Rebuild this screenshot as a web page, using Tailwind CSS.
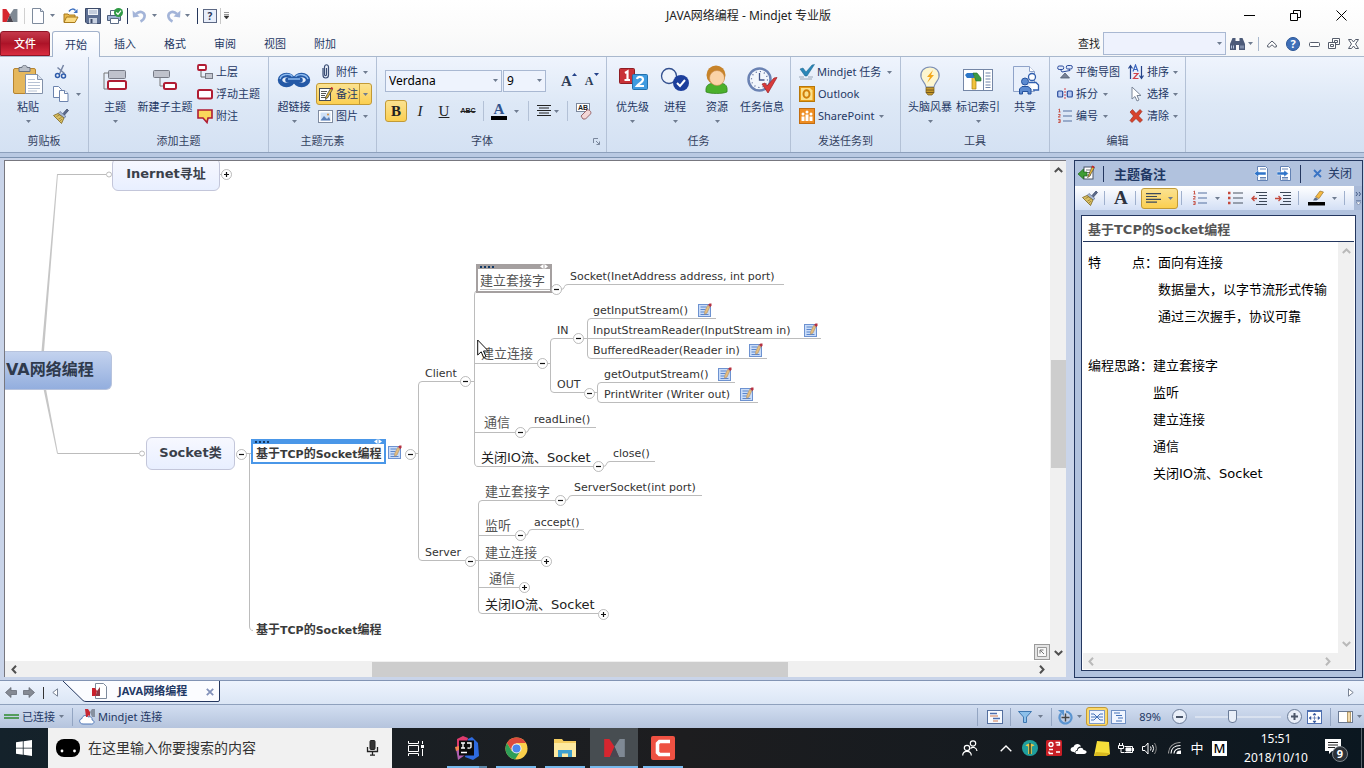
<!DOCTYPE html>
<html lang="zh-CN">
<head>
  <meta charset="UTF-8">
  <meta name="viewport" content="width=device-width, initial-scale=1">
  <title>JAVA网络编程 - Mindjet 专业版</title>
  <script src="https://cdn.jsdelivr.net/npm/@tailwindcss/browser@4"></script>
</head>
<body class="h-screen overflow-hidden flex flex-col bg-[#b9c9e2] font-['Noto_Sans','Noto_Sans_CJK_SC',sans-serif] text-[11px] leading-4 text-[#1f3864]">

  <!-- Shared symbols -->
  <svg class="hidden">
    <symbol id="caret" viewBox="0 0 5 3"><path d="M0 0h5L2.500 3z" fill="#6f7c90"/></symbol>
    <symbol id="note" viewBox="0 0 14 14">
      <rect x=".5" y="1.500" width="12" height="12" fill="#c9dcf8" stroke="#6d92d0"/>
      <path d="M2.500 4h6M2.500 6.500h5M2.500 9h4M2.500 11.500h8" stroke="#5b86cc"/>
      <path d="M9.500 2.500l2.500 1-3 6.500-2.500 1.500.2-3z" fill="#e5bd7e" stroke="#9a8160" stroke-width=".5"/>
      <path d="M10 2l1.500-1.500h2v2L12.500 4z" fill="#b5303f"/>
    </symbol>
    <symbol id="pad" viewBox="0 0 16 16">
      <rect x="1.500" y="2.500" width="11" height="12" fill="#fff" stroke="#444b57"/>
      <path d="M3 5.500h6M3 7.500h5M3 9.500h4M3 11.500h7" stroke="#555"/>
      <path d="M12.500 2.500l2 1-5 8.500-2 1.500.3-2.700z" fill="#e8b93b" stroke="#333" stroke-width=".7"/>
      <path d="M12.300 2.600L13.400 1l1.800 1-.7 1.600z" fill="#c1272d"/>
    </symbol>
    <symbol id="brush" viewBox="0 0 16 16">
      <path d="M10 5.500L14 1l1.500 1.500L11.500 7z" fill="#5b6b8c" stroke="#36415e" stroke-width=".7"/>
      <path d="M7 3.500l6 5-2 1.500-6-4.500z" fill="#a9b8d3" stroke="#536384" stroke-width=".6"/>
      <path d="M5 5.500l6 4.500-2.500 5.500L.5 7.500z" fill="#d9bf63" stroke="#7b6420" stroke-width=".8"/>
      <path d="M3.500 8.500l3-1.500M5.500 11l3-1.500M7 13l2-2" stroke="#8c7430" stroke-width=".7"/>
    </symbol>
    <symbol id="mlogo" viewBox="0 0 16 14">
      <path d="M0 0h4l4 6-3.500 8H0z" fill="#d6262f"/>
      <path d="M16 0h-4L8 6l3.500 8H16z" fill="#7f8994"/>
      <path d="M8 6l3.500 8h-7z" fill="#4a4650"/>
    </symbol>
    <symbol id="numlist" viewBox="0 0 16 16">
      <path d="M1.500 1.500l1-.5v3M1.500 4h2M1.200 6.500h2v1l-2 1.500h2.300M1.200 11.500h2v3h-2M1.500 13h1.500" stroke="#c4483b" stroke-width=".9" fill="none"/>
      <path d="M6 3h9M6 8h9M6 13h9" stroke="#55719f" stroke-width="1.200"/>
    </symbol>
    <symbol id="plus" viewBox="0 0 11 11"><circle cx="5.500" cy="5.500" r="5" fill="#fff" stroke="#a9a9a9" stroke-width=".8"/><path d="M3 5.500h5M5.500 3v5" stroke="#111" stroke-width="1.200"/></symbol>
    <symbol id="minus" viewBox="0 0 11 11"><circle cx="5.500" cy="5.500" r="5" fill="#fff" stroke="#a9a9a9" stroke-width=".8"/><path d="M3 5.500h5" stroke="#111" stroke-width="1.200"/></symbol>
  </svg>

  <!-- Title bar -->
  <header class="relative shrink-0 h-[31px] bg-gradient-to-b from-white to-[#fbfbfb] flex items-center justify-between">
    <div class="flex items-center pl-[2px]">
      <svg class="w-4 h-[13px]"><use href="#mlogo"/></svg>
      <span class="w-px h-4 bg-[#d0d0d0] ml-[6px]"></span>
      <button aria-label="新建" class="ml-[5px]"><svg class="size-4" viewBox="0 0 16 16"><path d="M2.500.5h8l3 3v12h-11z" fill="#fdfdff" stroke="#7d8a9c"/><path d="M10.500.5v3h3" fill="#dfe6f2" stroke="#7d8a9c"/></svg></button>
      <svg class="w-[5px] h-[3px] ml-[4px]"><use href="#caret"/></svg>
      <button aria-label="打开" class="ml-[8px]"><svg class="size-4" viewBox="0 0 16 16"><path d="M1 14V6h4l1 1h6v2" fill="#e9b94d" stroke="#a87b1e"/><path d="M3.500 9H15l-3 5.500H1z" fill="#fbdb83" stroke="#a87b1e"/><path d="M6 3.500c2-3 5-3 6.500-1" fill="none" stroke="#3c6fc0" stroke-width="1.500"/><path d="M14.500 1v4h-4z" fill="#3c6fc0"/></svg></button>
      <button aria-label="保存" class="ml-[6px]"><svg class="size-4" viewBox="0 0 16 16"><path d="M.5.5h15v15H2l-1.500-1.500z" fill="#5d6f93" stroke="#3c4a68"/><path d="M3 1h10v6H3z" fill="#eef2f8"/><path d="M4 3h8M4 5h8" stroke="#9aa8c2"/><path d="M4 10h8v5.500H4z" fill="#c9d2e2"/><path d="M5.500 11h2v4h-2z" fill="#3c4a68"/></svg></button>
      <button aria-label="打印" class="ml-[6px]"><svg class="size-4" viewBox="0 0 16 16"><path d="M3.500 7V2.500h7V7" fill="#fff" stroke="#5c6c86"/><path d="M.5 7.500h13v5H.5z" fill="#9fb2d2" stroke="#4d5e7c"/><path d="M3.500 10.500h8v5h-8z" fill="#fff" stroke="#5c6c86"/><circle cx="11.500" cy="4.500" r="4.500" fill="#2f9a44"/><path d="M9.200 4.500l1.800 1.800 3-3.600" fill="none" stroke="#fff" stroke-width="1.300"/></svg></button>
      <span class="w-px h-4 bg-[#25365a] ml-[4px]"></span>
      <button aria-label="撤消" class="ml-[4px]"><svg class="size-4" viewBox="0 0 16 16"><path d="M4 6c4.500-4.500 9.500-1 8.500 3-.4 2-2 3.500-4 4.500" fill="none" stroke="#a3b4d8" stroke-width="2.600"/><path d="M.5 2.500l.5 7 6.500-1z" fill="#a3b4d8"/></svg></button>
      <svg class="w-[5px] h-[3px] ml-[4px]"><use href="#caret"/></svg>
      <button aria-label="恢复" class="ml-[8px]"><svg class="size-4" viewBox="0 0 16 16"><path d="M12 6C7.500 1.500 2.500 5 3.500 9c.4 2 2 3.500 4 4.500" fill="none" stroke="#a3b4d8" stroke-width="2.600"/><path d="M15.500 2.500l-.5 7-6.500-1z" fill="#a3b4d8"/></svg></button>
      <svg class="w-[5px] h-[3px] ml-[4px]"><use href="#caret"/></svg>
      <span class="w-px h-4 bg-[#25365a] ml-[7px]"></span>
      <button aria-label="帮助主题" class="ml-[5px] size-[14px] bg-[#e8eefa] border border-[#5c6884] leading-3 font-bold text-[10px] text-[#2c3758]">?</button>
      <span class="w-px h-4 bg-[#c8c8c8] ml-[3px]"></span>
      <svg class="w-[5px] h-[7px] ml-[3px]" viewBox="0 0 5 7"><path d="M0 .5h5M0 2.500h5M0 4h5L2.500 7z" fill="#333" stroke="#333" stroke-width=".5"/></svg>
    </div>
    <h1 class="absolute inset-x-0 mx-auto w-fit left-[133px] text-xs text-[#222]">JAVA网络编程 - Mindjet 专业版</h1>
    <div class="relative flex items-center text-black">
      <button aria-label="最小化" class="w-[46px] flex justify-center"><svg class="size-[11px]" viewBox="0 0 11 11"><path d="M0 5.500h11" stroke="currentColor"/></svg></button>
      <button aria-label="还原" class="w-[46px] flex justify-center"><svg class="size-[11px]" viewBox="0 0 11 11" fill="none" stroke="currentColor"><path d="M.5 3.500h7v7h-7zM3.500 3V.5h7v7H8"/></svg></button>
      <button aria-label="关闭" class="w-[46px] flex justify-center"><svg class="size-[11px]" viewBox="0 0 11 11"><path d="M.5.5l10 10M10.500.5l-10 10" stroke="currentColor"/></svg></button>
    </div>
  </header>

  <!-- Ribbon tabs -->
  <nav class="shrink-0 h-[26px] bg-gradient-to-b from-[#fbfbfb] to-[#f6f7f8] border-b border-[#a9b8cd] flex justify-between">
    <div class="flex">
      <button class="w-[50px] h-[25px] rounded-t-[3px] border border-[#8f1425] bg-gradient-to-b from-[#c5384b] via-[#ad1328] to-[#d92c40] text-white font-medium">文件</button>
      <button class="ml-[2px] w-[48px] h-[26px] rounded-t-[3px] border border-b-0 border-[#a3b3cc] bg-gradient-to-b from-white to-[#eff4fd]">开始</button>
      <button class="w-[50px]">插入</button>
      <button class="w-[50px]">格式</button>
      <button class="w-[50px]">审阅</button>
      <button class="w-[50px]">视图</button>
      <button class="w-[50px]">附加</button>
    </div>
    <div class="flex items-center pr-[5px]">
      <label for="find" class="text-[#222] mr-[3px]">查找</label>
      <div class="relative">
        <input id="find" type="text" class="block w-[123px] h-[23px] border border-[#a9b8d2] bg-[#eef2fd] px-1">
        <svg class="absolute right-[4px] top-[10px] w-[5px] h-[3px]"><use href="#caret"/></svg>
      </div>
      <button aria-label="查找" class="ml-[4px]"><svg class="w-[15px] h-[14px]" viewBox="0 0 15 14"><path d="M2.500 1h3v3h4V1h3L15 7v6H9V8H6v5H0V7z" fill="#4c5a78"/><path d="M1.500 8.500v3M3.500 8.500v3M11 8.500v3M13 8.500v3" stroke="#b4c1dc"/></svg></button>
      <svg class="w-[5px] h-[3px] ml-[3px]"><use href="#caret"/></svg>
      <span class="w-px h-[14px] bg-[#a9b8cd] ml-[5px]"></span>
      <button aria-label="折叠功能区" class="ml-[8px]"><svg class="w-[10px] h-2" viewBox="0 0 10 8"><path d="M.7 5L5 1l4.300 4v2H7.500L5 4.800 2.500 7H.7z" fill="#fff" stroke="#555c6b"/></svg></button>
      <button aria-label="帮助" class="ml-[9px] size-[14px] rounded-full bg-[#3e6fb8] border border-[#2b5596] text-white font-bold leading-3">?</button>
      <button aria-label="最小化文档" class="ml-[9px]"><svg class="w-[11px] h-[6px]" viewBox="0 0 11 6"><rect x=".5" y="1.500" width="10" height="4" rx="1" fill="#fff" stroke="#555c6b"/></svg></button>
      <button aria-label="还原文档" class="ml-[8px]"><svg class="w-3 h-[11px]" viewBox="0 0 12 11" fill="#fff" stroke="#555c6b"><path d="M4.500.5h7v6h-7z"/><path d="M6.500 2.500h3v2h-3zM.5 4.500h7v6h-7z"/><path d="M2.500 6.500h3v2h-3z"/></svg></button>
      <button aria-label="关闭文档" class="ml-[8px]"><svg class="w-[11px] h-[10px]" viewBox="0 0 11 10"><path d="M.5.5h3l2 2.500 2-2.500h3L7.500 5l3 4.500h-3L5.500 7l-2 2.500h-3L3.500 5z" fill="#fff" stroke="#555c6b"/></svg></button>
    </div>
  </nav>

  <!-- Ribbon -->
  <section class="shrink-0 h-24 flex whitespace-nowrap bg-gradient-to-b from-[#eff4fd] via-[#dde8f6] to-[#d4e1f3] border-b border-[#8da0bc]">

    <div class="w-[89px] shrink-0 border-r border-[#b3c1d6] flex flex-col">
      <div class="h-[76px] pt-1 pl-1 flex">
        <button class="w-12 pt-1 flex flex-col items-center">
          <svg class="size-[34px] shrink-0" viewBox="0 0 34 34"><rect x="2.500" y="3.500" width="22" height="25" rx="1.500" fill="#e5b75c" stroke="#b68430"/><path d="M8 2.500h3c0-3 5-3 5 0h3v4H8z" fill="#b9bec7" stroke="#6c7380"/><path d="M14.500 9.500h12l5 5v14h-17z" fill="#fff" stroke="#8291aa"/><path d="M26.500 9.500v5h5" fill="#dbe3f0" stroke="#8291aa"/><path d="M17 14.500h7M17 17.500h12M17 20.500h12M17 23.500h12M17 26h9" stroke="#b7c2d4"/></svg>
          <span>粘贴</span><svg class="w-[5px] h-[3px] mt-[5px]"><use href="#caret"/></svg>
        </button>
        <div class="flex flex-col pl-px">
          <button aria-label="剪切" class="h-[22px]"><svg class="size-4" viewBox="0 0 16 16"><path d="M10.500 1L6.500 10M4.500 3.500l7 6" stroke="#7584a4" stroke-width="1.500"/><circle cx="4.500" cy="11.500" r="2" fill="none" stroke="#2f5cab" stroke-width="1.500"/><circle cx="10.500" cy="12" r="2" fill="none" stroke="#2f5cab" stroke-width="1.500"/></svg></button>
          <button aria-label="复制" class="h-[22px] flex items-center"><svg class="size-4" viewBox="0 0 16 16" fill="#fff" stroke="#6c83ad"><path d="M.5.5h5l3 3v8h-8z"/><path d="M6.500 4.500h5l3.500 3v8H6.500z"/><path d="M11.500 4.500v3H15"/></svg><svg class="w-[5px] h-[3px] ml-[7px]"><use href="#caret"/></svg></button>
          <button aria-label="格式刷" class="h-[22px]"><svg class="size-4"><use href="#brush"/></svg></button>
        </div>
      </div>
      <h2 class="text-center text-[#33415f]">剪贴板</h2>
    </div>

    <div class="w-[180px] shrink-0 border-r border-[#b3c1d6] flex flex-col">
      <div class="h-[76px] pt-1 pl-[6px] flex">
        <button class="w-10 pt-1 flex flex-col items-center">
          <svg class="size-[34px] shrink-0" viewBox="0 0 34 34"><path d="M10 8H6v16h4" fill="none" stroke="#777"/><rect x="10.500" y="5.500" width="17" height="8" rx="1" fill="#bfc2cc" stroke="#767a86"/><rect x="10" y="16" width="18" height="8" rx="1.500" fill="#fff" stroke="#b01c33" stroke-width="2"/></svg>
          <span>主题</span><svg class="w-[5px] h-[3px] mt-[5px]"><use href="#caret"/></svg>
        </button>
        <button class="w-[60px] pt-1 flex flex-col items-center">
          <svg class="size-[34px] shrink-0" viewBox="0 0 34 34"><path d="M12 13v8h6" fill="none" stroke="#777"/><rect x="5.500" y="5.500" width="16" height="7" rx="1" fill="#bfc2cc" stroke="#767a86"/><rect x="16" y="18" width="12" height="6" rx="1.500" fill="#fff" stroke="#b01c33" stroke-width="2"/></svg>
          <span>新建子主题</span>
        </button>
        <div class="flex flex-col pl-[2px]">
          <button class="h-[22px] flex items-center gap-[3px]"><svg class="size-4" viewBox="0 0 16 16"><path d="M4 6v7h4" fill="none" stroke="#666"/><rect x="1" y="1" width="8" height="5" rx="1" fill="#fff" stroke="#b01c33" stroke-width="1.800"/><rect x="8.500" y="9.500" width="7" height="5" fill="#c3c6cf" stroke="#767a86"/></svg>上层</button>
          <button class="h-[22px] flex items-center gap-[3px]"><svg class="size-4" viewBox="0 0 16 16"><rect x="1" y="4" width="14" height="8.500" rx="1.500" fill="#fff" stroke="#b01c33" stroke-width="2"/></svg>浮动主题</button>
          <button class="h-[22px] flex items-center gap-[3px]"><svg class="size-4" viewBox="0 0 16 16"><path d="M1 2h14v8h-4l-1 4.500L6 10H1z" fill="#f9d75b" stroke="#b01c33" stroke-width="1.600"/></svg>附注</button>
        </div>
      </div>
      <h2 class="text-center text-[#33415f]">添加主题</h2>
    </div>

    <div class="w-[108px] shrink-0 border-r border-[#b3c1d6] flex flex-col">
      <div class="h-[76px] pt-1 pl-[5px] flex">
        <button class="w-10 pt-1 flex flex-col items-center">
          <svg class="size-[34px] shrink-0" viewBox="0 0 34 34"><g fill="none" stroke="#2459a6" stroke-width="4.500"><ellipse cx="9.500" cy="15" rx="6.500" ry="5"/><ellipse cx="24.500" cy="15" rx="6.500" ry="5"/></g><path d="M11 15h12" stroke="#2459a6" stroke-width="5.500" stroke-linecap="round"/><g fill="none" stroke="#8dbbf0" stroke-width="1.400"><path d="M3 14c1-5 10-6 12.500-2.500M18.500 11.500c3-3 11-2.500 12.500 2.500M11 14h12"/></g></svg>
          <span>超链接</span><svg class="w-[5px] h-[3px] mt-[5px]"><use href="#caret"/></svg>
        </button>
        <div class="flex flex-col pl-[2px]">
          <button class="w-14 h-[22px] pl-[2px] flex items-center"><svg class="size-4" viewBox="0 0 16 16"><path d="M5 4v7c0 4 5.500 4 5.500 0V3c0-3-4-3-4 0v7.500c0 1.500 2 1.500 2 0V4" fill="none" stroke="#3a4d74" stroke-width="1.200"/></svg><span class="ml-[2px]">附件</span><svg class="w-[5px] h-[3px] ml-[5px]"><use href="#caret"/></svg></button>
          <button class="w-14 h-[22px] pl-px flex items-center rounded-[3px] border border-[#c29a36] bg-gradient-to-b from-[#fbe28f] to-[#fbcf4f]"><svg class="size-4"><use href="#pad"/></svg><span class="ml-[2px]">备注</span><span class="w-px self-stretch ml-px bg-[#c29a36]"></span><svg class="w-[5px] h-[3px] ml-[3px]"><use href="#caret"/></svg></button>
          <button class="w-14 h-[22px] pl-[2px] flex items-center"><svg class="size-4" viewBox="0 0 16 16"><rect x=".5" y="2.500" width="14" height="12" fill="#fff" stroke="#7f8ba0"/><path d="M2.500 4.500h10v8h-10z" fill="#cfe0f6"/><path d="M2.500 12.500L6 8l3 3 2-2 1.500 3.500z" fill="#5a7fb8"/><circle cx="10" cy="6.500" r="1" fill="#d38a3a"/></svg><span class="ml-[2px]">图片</span><svg class="w-[5px] h-[3px] ml-[5px]"><use href="#caret"/></svg></button>
        </div>
      </div>
      <h2 class="text-center text-[#33415f]">主题元素</h2>
    </div>

    <div class="w-[230px] shrink-0 border-r border-[#b3c1d6] flex flex-col">
      <div class="h-[76px] pt-[13px] pl-2 flex flex-col gap-2">
        <div class="flex items-center h-[22px]">
          <div class="relative">
            <select aria-label="字体" class="appearance-none block w-[117px] h-[22px] px-[3px] border border-[#a9b8d2] bg-[#eef3fd] text-xs text-black"><option>Verdana</option></select>
            <svg class="absolute right-1 top-[9px] w-[5px] h-[3px]"><use href="#caret"/></svg>
          </div>
          <div class="relative ml-px">
            <select aria-label="字号" class="appearance-none block w-[43px] h-[22px] px-[3px] border border-[#a9b8d2] bg-[#eef3fd] text-xs text-black"><option>9</option></select>
            <svg class="absolute right-1 top-[9px] w-[5px] h-[3px]"><use href="#caret"/></svg>
          </div>
          <button aria-label="增大字号" class="ml-[15px] flex font-['Liberation_Serif',serif] font-bold text-[15px] text-[#2c3c55]">A<svg class="w-[5px] h-[3px]" viewBox="0 0 5 3"><path d="M0 3h5L2.500 0z" fill="#24428a"/></svg></button>
          <button aria-label="减小字号" class="ml-[8px] flex font-['Liberation_Serif',serif] font-bold text-xs text-[#2c3c55]">A<svg class="w-[5px] h-[3px]" viewBox="0 0 5 3"><path d="M0 0h5L2.500 3z" fill="#24428a"/></svg></button>
        </div>
        <div class="flex items-center h-[22px] font-['Liberation_Serif',serif] text-[15px] text-[#222]">
          <button aria-label="加粗" class="size-[22px] rounded-[3px] border border-[#c29a36] bg-gradient-to-b from-[#fbe28f] to-[#fbcf4f] font-bold">B</button>
          <button aria-label="倾斜" class="w-[26px] italic">I</button>
          <button aria-label="下划线" class="w-[22px] underline">U</button>
          <button aria-label="删除线" class="w-[26px] font-['Liberation_Sans',sans-serif] text-[7px] font-bold line-through">ABC</button>
          <span class="w-px h-5 bg-[#b3c1d6] ml-[2px]"></span>
          <button aria-label="字体颜色" class="ml-[7px] w-4 h-[18px] flex flex-col items-center"><span class="h-[14px] leading-[14px] font-bold text-[#31538c]">A</span><span class="w-4 h-1 bg-black"></span></button>
          <svg class="w-[5px] h-[3px] ml-[7px]"><use href="#caret"/></svg>
          <span class="w-px h-5 bg-[#b3c1d6] ml-[9px]"></span>
          <button aria-label="对齐" class="ml-[8px]"><svg class="w-[14px] h-3" viewBox="0 0 14 12"><path d="M0 .5h14M2 3h10M0 5.500h14M2 8h10M0 10.500h14" stroke="#222" stroke-width="1.200"/></svg></button>
          <svg class="w-[5px] h-[3px] ml-[3px]"><use href="#caret"/></svg>
          <span class="w-px h-5 bg-[#b3c1d6] ml-2"></span>
          <button aria-label="清除格式" class="ml-[8px] relative w-4 h-4"><span class="absolute left-0 top-0 w-[14px] h-[9px] border border-[#7c879b] bg-white font-['Liberation_Sans',sans-serif] text-[7px] leading-[7px] font-bold">AB</span><svg class="absolute left-[4px] top-[5px] size-3" viewBox="0 0 12 12"><path d="M1 8l6-6c2-1 5 2 3.500 4l-5 5H3z" fill="#f3d6d6" stroke="#98656b"/></svg></button>
        </div>
      </div>
      <div class="flex justify-between items-center pl-[94px] pr-[6px]">
        <h2 class="text-[#33415f]">字体</h2>
        <button aria-label="字体设置"><svg class="size-[7px]" viewBox="0 0 7 7"><path d="M.5 5V.5H5M3 3l3.500 3.500M6.500 3.500v3h-3" fill="none" stroke="#7a879d"/></svg></button>
      </div>
    </div>

    <div class="w-[184px] shrink-0 border-r border-[#b3c1d6] flex flex-col">
      <div class="h-[76px] pt-1 pl-1 flex">
        <button class="w-[43px] pt-1 flex flex-col items-center">
          <svg class="size-[34px] shrink-0" viewBox="0 0 34 34"><rect x="3.500" y="3.500" width="15" height="15" rx="1" fill="#c93238" stroke="#8f1d23"/><path d="M9 8l2.500-1.500V15M8.500 15h5.500" fill="none" stroke="#fff" stroke-width="2.200"/><rect x="16.500" y="9.500" width="15" height="15" rx="1" fill="#3f9be0" stroke="#2270ac"/><path d="M21 14c1-3 6-2.500 6 .5 0 2.500-4 4-6 6.500h7" fill="none" stroke="#fff" stroke-width="2.200"/></svg>
          <span>优先级</span><svg class="w-[5px] h-[3px] mt-[5px]"><use href="#caret"/></svg>
        </button>
        <button class="w-[42px] pt-1 flex flex-col items-center">
          <svg class="size-[34px] shrink-0" viewBox="0 0 34 34"><circle cx="11" cy="11" r="7.500" fill="#eef3fb" stroke="#33508f" stroke-width="1.300"/><circle cx="23" cy="18" r="8" fill="#1d3f9c"/><path d="M19 18l3 3 5-6" fill="none" stroke="#fff" stroke-width="2"/></svg>
          <span>进程</span><svg class="w-[5px] h-[3px] mt-[5px]"><use href="#caret"/></svg>
        </button>
        <button class="w-[42px] pt-1 flex flex-col items-center">
          <svg class="size-[34px] shrink-0" viewBox="0 0 34 34"><path d="M6 27c-1-8 4-9 11-9s11 1 10 9c-5 2-16 2-21 0z" fill="#4bb02c" stroke="#2d7c18" stroke-width=".7"/><circle cx="16" cy="10" r="9.500" fill="#c7832a"/><circle cx="17" cy="13" r="7.500" fill="#fbd3a7" stroke="#c98a4a" stroke-width=".6"/></svg>
          <span>资源</span><svg class="w-[5px] h-[3px] mt-[5px]"><use href="#caret"/></svg>
        </button>
        <button class="w-12 pt-1 flex flex-col items-center">
          <svg class="size-[34px] shrink-0" viewBox="0 0 34 34"><circle cx="14.500" cy="14.500" r="11" fill="#f2f6fc" stroke="#6a82b3" stroke-width="2.500"/><circle cx="14.500" cy="14.500" r="8" fill="none" stroke="#44578a" stroke-width="1.200" stroke-dasharray="1 3.200"/><path d="M14.500 8v7h5" fill="none" stroke="#44578a" stroke-width="1.300"/><path d="M17 19l3-1 2 3 7-8 3-.5L23 28z" fill="#d93a3a" stroke="#9c1f24" stroke-width=".7"/></svg>
          <span>任务信息</span>
        </button>
      </div>
      <h2 class="text-center text-[#33415f]">任务</h2>
    </div>

    <div class="w-[110px] shrink-0 border-r border-[#b3c1d6] flex flex-col">
      <div class="h-[76px] pt-1 pl-2 flex flex-col items-start">
        <button class="h-[22px] flex items-center gap-[2px]"><svg class="size-4" viewBox="0 0 16 16"><path d="M1 5l3-1 3 4 6-7 2.500-.5L8 12H6z" fill="#2a87b8" stroke="#1b6089" stroke-width=".5"/><path d="M0 13h5M9 13h5M1 15h12" stroke="#9aa8b8" stroke-width="1.200"/></svg>Mindjet 任务<svg class="w-[5px] h-[3px] ml-[4px]"><use href="#caret"/></svg></button>
        <button class="h-[22px] flex items-center gap-[3px]"><svg class="size-4" viewBox="0 0 16 16"><rect x=".5" y=".5" width="15" height="15" fill="#e89b16" stroke="#b87708"/><path d="M2 2h9l2.500 2.500V14H2z" fill="#fbe08c"/><ellipse cx="7.500" cy="8" rx="3" ry="3.800" fill="none" stroke="#d07f0b" stroke-width="2"/></svg>Outlook</button>
        <button class="h-[22px] flex items-center gap-[3px]"><svg class="size-4" viewBox="0 0 16 16"><rect x=".5" y=".5" width="15" height="15" fill="#ee8d22" stroke="#c36d10"/><g fill="#fff"><circle cx="4" cy="6" r="1.500"/><circle cx="8" cy="4" r="1.500"/><circle cx="12" cy="6" r="1.500"/><path d="M2.500 8.500h3V13h-3zM6.500 6.500h3V13h-3zM10.500 8.500h3V13h-3z"/></g></svg>SharePoint<svg class="w-[5px] h-[3px] ml-[2px]"><use href="#caret"/></svg></button>
      </div>
      <h2 class="text-center text-[#33415f]">发送任务到</h2>
    </div>

    <div class="w-[149px] shrink-0 border-r border-[#b3c1d6] flex flex-col">
      <div class="h-[76px] pt-1 pl-[5px] flex">
        <button class="w-12 pt-1 flex flex-col items-center">
          <svg class="size-[34px] shrink-0" viewBox="0 0 34 34"><path d="M17 2c-6 0-10 4.500-9 10 .7 4 4.500 6 5 10h8c.5-4 4.300-6 5-10 1-5.500-3-10-9-10z" fill="#fdf6cf" stroke="#7c8fb5" stroke-width="1.200"/><path d="M20 5l-6 7h3l-3 6 7-8h-3z" fill="#f3a81c"/><path d="M13 22.500h8v5l-2 2.500h-4l-2-2.500z" fill="#c79a2c" stroke="#76591a" stroke-width=".7"/><path d="M13 25h8M13 27.500h8" stroke="#76591a"/></svg>
          <span>头脑风暴</span><svg class="w-[5px] h-[3px] mt-[5px]"><use href="#caret"/></svg>
        </button>
        <button class="w-12 pt-1 flex flex-col items-center">
          <svg class="size-[34px] shrink-0" viewBox="0 0 34 34"><rect x="2.500" y="4.500" width="29" height="21" fill="#fff" stroke="#7486a6"/><path d="M22.500 5v20" stroke="#7486a6"/><path d="M24.500 8h5M24.500 11h5M24.500 14h5M24.500 17h5M24.500 20h5M24.500 22.500h5" stroke="#6f83a8"/><path d="M11 12h4v12h-4z" fill="#f2c33d" stroke="#aa7f10" stroke-width=".7"/><path d="M4 10l2-2h7v5H6z" fill="#2c76c8"/><path d="M12 8h4l4 5v3h-5z" fill="#3d9b45" stroke="#1f6e29" stroke-width=".6"/></svg>
          <span>标记索引</span><svg class="w-[5px] h-[3px] mt-[5px]"><use href="#caret"/></svg>
        </button>
        <button class="w-[46px] pt-1 flex flex-col items-center">
          <svg class="size-[34px] shrink-0" viewBox="0 0 34 34"><path d="M5.500 1.500h16l5 5v20h-21z" fill="#e9f0fb" stroke="#8fa3c9"/><path d="M21.500 1.500v5h5" fill="#fff" stroke="#8fa3c9"/><circle cx="24" cy="12" r="3.500" fill="#fff" stroke="#315fae" stroke-width="1.300"/><path d="M21 17.500h7l2.500 2.500v5H25" fill="#fff" stroke="#315fae" stroke-width="1.300"/><circle cx="17" cy="16.500" r="3.500" fill="#5b8ad0" stroke="#24519c"/><path d="M11.500 29v-5l2.500-2.500h6l3 2.500v5h-3v-2.500h-5.500V29z" fill="#5b8ad0" stroke="#24519c"/></svg>
          <span>共享</span>
        </button>
      </div>
      <h2 class="text-center text-[#33415f]">工具</h2>
    </div>

    <div class="w-[136px] shrink-0 border-r border-[#b3c1d6] flex flex-col">
      <div class="h-[76px] pt-1 pl-[7px] flex">
        <div class="w-[71px] shrink-0 flex flex-col items-start">
          <button class="h-[22px] flex items-center gap-[3px]"><svg class="size-4" viewBox="0 0 16 16"><g fill="#dfe8fb" stroke="#2a4b9c"><rect x=".7" y="2" width="6" height="3.500" rx="1.500"/><rect x="9.300" y="1.500" width="6" height="3.500" rx="1.500"/></g><path d="M3.500 5.500L5 8l8-1.500-1-1.500" fill="none" stroke="#2a4b9c"/><path d="M8 9l4.500 5h-9z" fill="#788296" stroke="#4f5a70" stroke-width=".8"/></svg>平衡导图</button>
          <button class="h-[22px] flex items-center gap-[3px]"><svg class="size-4" viewBox="0 0 16 16"><rect x=".7" y="5" width="5" height="6" rx="1" fill="#b9ccf3" stroke="#2a4b9c" stroke-width="1.200"/><rect x="10.300" y="5" width="5" height="6" rx="1" fill="#b9ccf3" stroke="#2a4b9c" stroke-width="1.200"/><path d="M8 2v12" stroke="#d2404a" stroke-dasharray="2 1"/></svg>拆分<svg class="w-[5px] h-[3px] ml-[2px]"><use href="#caret"/></svg></button>
          <button class="h-[22px] flex items-center gap-[3px]"><svg class="size-4"><use href="#numlist"/></svg>编号<svg class="w-[5px] h-[3px] ml-[2px]"><use href="#caret"/></svg></button>
        </div>
        <div class="flex flex-col items-start">
          <button class="h-[22px] flex items-center gap-[3px]"><svg class="size-4" viewBox="0 0 16 16"><path d="M2.500 15V2M.5 4.500l2-3 2 3M13.500 2v12M11.500 11.500l2 3 2-3" fill="none" stroke="#24428a" stroke-width="1.200"/><path d="M5 7.500L7.500 1 10 7.500M6 5.500h3" fill="none" stroke="#3b66c0" stroke-width="1.200"/><path d="M5.500 9.500h4.500l-4.500 5h5" fill="none" stroke="#d2404a" stroke-width="1.200"/></svg>排序<svg class="w-[5px] h-[3px] ml-px"><use href="#caret"/></svg></button>
          <button class="h-[22px] flex items-center gap-[3px]"><svg class="size-4" viewBox="0 0 16 16"><path d="M4 1v12l3-2.500 2 4.500 2-1-2-4.500h4z" fill="#fff" stroke="#7b8699"/></svg>选择<svg class="w-[5px] h-[3px] ml-px"><use href="#caret"/></svg></button>
          <button class="h-[22px] flex items-center gap-[3px]"><svg class="size-4" viewBox="0 0 16 16"><path d="M2 4l2.500-2.500L8 5.500l4-4 2 2L10.500 8l4 4-2.500 2.500-4-4-4 4L2 12.500 5.500 8z" fill="#d8432b" stroke="#8f2313" stroke-width=".6"/></svg>清除<svg class="w-[5px] h-[3px] ml-px"><use href="#caret"/></svg></button>
        </div>
      </div>
      <h2 class="text-center text-[#33415f]">编辑</h2>
    </div>
  </section>

  <!-- Work area -->
  <main class="flex-1 min-h-0 mt-1 flex border-t border-[#7d93b0] bg-[#c9d4e9]">
    <div class="flex-1 min-w-0 mt-[2px] ml-1 mb-[3px] flex flex-col border-l border-t border-[#77777f]">
      <div class="flex-1 min-h-0 flex">
        <div id="map" class="relative flex-1 min-w-0 overflow-hidden bg-white font-['DejaVu_Sans','Noto_Sans_CJK_SC',sans-serif]"></div>
        <div class="w-4 bg-[#f0f0f0] flex flex-col items-center text-[#505050]">
          <button aria-label="向上滚动" class="h-[17px]"><svg class="w-[9px] h-[6px]" viewBox="0 0 9 6"><path d="M.8 5l3.700-3.500L8.200 5" fill="none" stroke="currentColor" stroke-width="2"/></svg></button>
          <div class="flex-[182] min-h-0"></div>
          <div class="flex-[107] min-h-0 w-[15px] bg-[#cdcdcd]"></div>
          <div class="flex-[176] min-h-0"></div>
          <button aria-label="向下滚动" class="h-[17px]"><svg class="w-[9px] h-[6px]" viewBox="0 0 9 6"><path d="M.8 1l3.700 3.500L8.200 1" fill="none" stroke="currentColor" stroke-width="2"/></svg></button>
        </div>
      </div>
      <div class="h-4 bg-[#f0f0f0] flex items-center pr-4 text-[#505050]">
        <button aria-label="向左滚动" class="w-[17px] flex justify-center"><svg class="w-[6px] h-[9px]" viewBox="0 0 6 9"><path d="M5 .8L1.500 4.500 5 8.200" fill="none" stroke="currentColor" stroke-width="2"/></svg></button>
        <div class="flex-[350]"></div>
        <div class="flex-[416] h-[15px] bg-[#cdcdcd]"></div>
        <div class="flex-[245]"></div>
        <button aria-label="向右滚动" class="w-[17px] flex justify-center"><svg class="w-[6px] h-[9px]" viewBox="0 0 6 9"><path d="M1 .8l3.500 3.700L1 8.200" fill="none" stroke="currentColor" stroke-width="2"/></svg></button>
      </div>
    </div>

    <!-- Notes pane -->
    <aside class="w-[289px] shrink-0 ml-2 mr-[1px] mt-[2px] mb-[2px] border border-[#24375f] bg-[#b1c2de] flex flex-col">
      <div class="h-[25px] shrink-0 flex items-center pl-[3px] pr-[10px]">
        <svg class="size-[17px]" viewBox="0 0 17 17"><rect x="6" y="2" width="9" height="12" fill="#fff" stroke="#48546a"/><path d="M8 5h4M8 7.500h4M8 10h5" stroke="#777"/><path d="M0 9l5.500-5v3H9v4H5.500v3z" fill="#3f9d34" stroke="#20661a" stroke-width=".7"/><path d="M14 1.500l2.500 1-5 9-2 1z" fill="#e8b93b" stroke="#333" stroke-width=".6"/><path d="M14 .5l2.500 1-.7 1.800-2.200-1z" fill="#c1272d"/></svg>
        <span class="w-px h-4 bg-[#24375f] ml-[8px]"></span>
        <h2 class="ml-[10px] text-[13px] font-bold">主题备注</h2>
        <button aria-label="上一个" class="ml-auto"><svg class="size-[15px]" viewBox="0 0 15 15"><path d="M3.500.5h8l2 2v12h-10z" fill="#fff" stroke="#6382b4"/><path d="M6 3h6M6 11.500h6M6 13h6" stroke="#6382b4"/><path d="M0 7.500L4.500 4v2H12v3H4.500v2z" fill="#2f74c9" stroke="#fff" stroke-width=".5"/></svg></button>
        <button aria-label="下一个" class="ml-2"><svg class="size-[15px]" viewBox="0 0 15 15"><path d="M3.500.5h8l2 2v12h-10z" fill="#fff" stroke="#6382b4"/><path d="M5 3h6M5 11.500h6M5 13h6" stroke="#6382b4"/><path d="M11.500 7.500L7 4v2H0v3h7v2z" fill="#2f74c9" stroke="#fff" stroke-width=".5"/></svg></button>
        <span class="w-px h-[18px] bg-[#24375f] ml-[8px]"></span>
        <button class="ml-[12px] flex items-center gap-[6px] text-xs"><svg class="size-[9px]" viewBox="0 0 9 9"><path d="M1 1l7 7M8 1L1 8" stroke="#3a74c4" stroke-width="1.800"/></svg>关闭</button>
      </div>
      <div class="h-6 shrink-0 flex items-center bg-gradient-to-b from-white to-[#d3dff5]">
        <button aria-label="格式刷" class="ml-[7px]"><svg class="size-4"><use href="#brush"/></svg></button>
        <span class="w-px h-[14px] bg-[#9fb0cd] ml-[6px]"></span>
        <button aria-label="字体" class="ml-[9px] font-['Liberation_Serif',serif] font-bold text-[19px] text-[#2d3340]">A</button>
        <span class="w-px h-[14px] bg-[#9fb0cd] ml-[7px]"></span>
        <button aria-label="左对齐" class="ml-[5px] w-[37px] h-[21px] rounded-[3px] border border-[#c29a36] bg-gradient-to-b from-[#fbe28f] to-[#fbcf4f] flex items-center justify-center gap-[7px]"><svg class="w-[15px] h-[10px]" viewBox="0 0 15 10"><path d="M0 .7h15M0 3.500h11M0 6.300h15M0 9.200h11" stroke="#3c4a5c" stroke-width="1.200"/></svg><svg class="w-[5px] h-[3px]"><use href="#caret"/></svg></button>
        <span class="w-px h-[14px] bg-[#9fb0cd] ml-[3px]"></span>
        <button aria-label="编号列表" class="ml-[10px] flex items-center gap-[7px]"><svg class="size-4"><use href="#numlist"/></svg><svg class="w-[5px] h-[3px]"><use href="#caret"/></svg></button>
        <button aria-label="项目符号" class="ml-[7px]"><svg class="size-4" viewBox="0 0 16 16"><path d="M1 3h2.500M1 8h2.500M1 13h2.500" stroke="#c4483b" stroke-width="2.500"/><path d="M6 3h10M6 8h10M6 13h10" stroke="#4b5563" stroke-width="1.200"/></svg></button>
        <button aria-label="减少缩进" class="ml-2"><svg class="size-4" viewBox="0 0 16 16"><path d="M5 2.500h11M8 5.500h8M8 8.500h8M8 11.500h8M5 14.500h11" stroke="#3c4757"/><path d="M1 8.500h5M3.500 6L1 8.500 3.500 11" fill="none" stroke="#c4483b" stroke-width="1.300"/></svg></button>
        <button aria-label="增加缩进" class="ml-2"><svg class="size-4" viewBox="0 0 16 16"><path d="M5 2.500h11M8 5.500h8M8 8.500h8M8 11.500h8M5 14.500h11" stroke="#3c4757"/><path d="M0 8.500h6M3.500 6L6 8.500 3.500 11" fill="none" stroke="#c4483b" stroke-width="1.300"/></svg></button>
        <span class="w-px h-[14px] bg-[#9fb0cd] ml-[7px]"></span>
        <button aria-label="突出显示" class="ml-[9px] flex items-center gap-[7px]"><svg class="w-[17px] h-4" viewBox="0 0 17 16"><path d="M12 1l3.500 1L11 8.500 7.500 7z" fill="#f5b942" stroke="#8a6420" stroke-width=".6"/><path d="M7 7.500l3.500 1.500-2 1.500H5z" fill="#5a6b88"/><path d="M0 12h17v3.500H0z" fill="#000"/></svg><svg class="w-[5px] h-[3px]"><use href="#caret"/></svg></button>
        <span class="w-px h-[14px] bg-[#9fb0cd] ml-[7px]"></span>
        <button aria-label="更多" class="ml-auto w-2 h-6 bg-[#a9bad8] flex flex-col items-center justify-center gap-1"><svg class="w-[6px] h-[4px]" viewBox="0 0 6 4"><path d="M1 0l1.500 2L1 4M4 0l1.500 2L4 4" fill="none" stroke="#445b85"/></svg><svg class="w-[5px] h-[5px]" viewBox="0 0 5 5"><path d="M0 .5h5M0 2h5L2.500 5z" fill="#fff" stroke="#445b85" stroke-width=".5"/></svg></button>
      </div>
      <div class="flex-1 min-h-0 mt-[5px] mx-[6px] mb-[6px] border border-[#24375f] bg-white p-px flex flex-col font-['DejaVu_Sans','Noto_Sans_CJK_SC',sans-serif] text-[13px] text-black">
        <h3 class="h-[25px] shrink-0 pl-[5px] leading-[25px] font-bold text-[#555] border-b border-[#24375f]">基于TCP的Socket编程</h3>
        <div class="flex-1 min-h-0 flex">
          <div class="flex-1 min-w-0 pl-[5px] pt-[7px] leading-[27px] whitespace-nowrap">
            <div class="flex">
              <p class="w-[70px] flex justify-between"><span>特</span><span>点：</span></p>
              <div>
                <p>面向有连接</p>
                <p>数据量大，以字节流形式传输</p>
                <p>通过三次握手，协议可靠</p>
              </div>
            </div>
            <div class="flex mt-[22px]">
              <p class="w-[65px]">编程思路：</p>
              <div>
                <p>建立套接字</p>
                <p>监听</p>
                <p>建立连接</p>
                <p>通信</p>
                <p>关闭IO流、Socket</p>
              </div>
            </div>
          </div>
          <div class="w-4 bg-[#f0f0f0] flex flex-col items-center justify-between py-[6px] text-[#b9b9b9]">
            <svg class="w-[9px] h-[6px]" viewBox="0 0 9 6"><path d="M.8 5l3.700-3.500L8.200 5" fill="none" stroke="currentColor" stroke-width="2"/></svg>
            <svg class="w-[9px] h-[6px]" viewBox="0 0 9 6"><path d="M.8 1l3.700 3.500L8.200 1" fill="none" stroke="currentColor" stroke-width="2"/></svg>
          </div>
        </div>
        <div class="h-4 bg-[#f0f0f0] flex items-center justify-between pl-[5px] pr-[23px] text-[#b9b9b9]">
          <svg class="w-[6px] h-[9px]" viewBox="0 0 6 9"><path d="M5 .8L1.500 4.500 5 8.200" fill="none" stroke="currentColor" stroke-width="2"/></svg>
          <svg class="w-[6px] h-[9px]" viewBox="0 0 6 9"><path d="M1 .8l3.500 3.700L1 8.200" fill="none" stroke="currentColor" stroke-width="2"/></svg>
        </div>
      </div>
    </aside>
  </main>

  <!-- Document tabs -->
  <div class="shrink-0 h-6 border-t border-[#8294b4] bg-gradient-to-b from-[#edf3fd] to-[#dbe6f5] flex items-center pr-[10px]">
    <button aria-label="后退" class="ml-[5px]"><svg class="w-3 h-[11px]" viewBox="0 0 12 11"><path d="M.5 5.500L6 .5v3h5.500v4H6v3z" fill="#858a93" stroke="#5d626c" stroke-width=".7"/></svg></button>
    <button aria-label="前进" class="ml-[6px]"><svg class="w-3 h-[11px]" viewBox="0 0 12 11"><path d="M11.500 5.500L6 .5v3H.5v4H6v3z" fill="#858a93" stroke="#5d626c" stroke-width=".7"/></svg></button>
    <span class="w-px h-3 bg-[#333] ml-[8px]"></span>
    <button aria-label="向左" class="ml-2"><svg class="w-[6px] h-[9px]" viewBox="0 0 6 9"><path d="M5.500.8v7.400L.8 4.500z" fill="#fff" stroke="#6b7688" stroke-width=".9"/></svg></button>
    <div class="relative self-start ml-[5px] w-[158px] h-[21px] flex items-center">
      <svg class="absolute inset-0 w-full h-full" viewBox="0 0 158 21"><path d="M0 0L20 19.500Q21 20.500 23 20.500H155Q156.500 20.500 156.500 19V0z" fill="#fbfcff"/><path d="M0 0L20 19.500Q21 20.500 23 20.500H155Q156.500 20.500 156.500 19V0" fill="none" stroke="#24375f"/></svg>
      <svg class="relative size-4 ml-[29px] mb-[2px] shrink-0" viewBox="0 0 16 16"><path d="M3.500.5h8l3 3v12h-11z" fill="#fff" stroke="#7d8a9c"/><path d="M0 5h3l2 3-1.500 5H0z" fill="#c9202c"/><path d="M5 8l3-4v9H3.500z" fill="#8e3844"/></svg>
      <a href="#map" class="relative ml-[10px] mb-[2px] font-bold whitespace-nowrap">JAVA网络编程</a>
      <button aria-label="关闭标签" class="absolute right-[7px] top-[7px]"><svg class="size-2" viewBox="0 0 8 8"><path d="M.8.8l6.400 6.400M7.200.8L.8 7.200" stroke="#8392ba" stroke-width="1.800"/></svg></button>
    </div>
    <button aria-label="向右" class="ml-auto"><svg class="w-[6px] h-[9px]" viewBox="0 0 6 9"><path d="M.5.8v7.400l4.700-3.700z" fill="#fff" stroke="#6b7688" stroke-width=".9"/></svg></button>
  </div>

  <!-- Status bar -->
  <footer class="shrink-0 h-6 border-t border-[#8fa1bd] bg-gradient-to-b from-[#d2def1] to-[#b5c4dd] flex items-center justify-between">
    <div class="flex items-center">
      <button class="flex items-center pl-1"><svg class="w-[15px] h-[5px]" viewBox="0 0 15 5"><path d="M0 1h15M0 4h15" stroke="#2f8a2f" stroke-width="1.500"/></svg><span class="ml-[3px]">已连接</span><svg class="w-[5px] h-[3px] ml-[4px]"><use href="#caret"/></svg></button>
      <span class="w-px h-[18px] bg-[#93a5c2] ml-2"></span>
      <button class="flex items-center ml-[6px] gap-[3px]"><svg class="size-4" viewBox="0 0 16 16"><path d="M4 15c-4 0-4.500-5-1-5.500C3.500 6 8 5.500 9 8c3-1 4.500 1 4 3 3 .5 2.500 4-.5 4z" fill="#fff" stroke="#5078b8"/><path d="M6 0h3l2 3v5l-1-2-2 2H7z" fill="#c72734"/><path d="M11 3l2-3h3v8h-3z" fill="#8790a0"/></svg>Mindjet 连接</button>
    </div>
    <div class="flex items-center">
      <span class="w-px h-[18px] bg-[#93a5c2]"></span>
      <button aria-label="筛选视图" class="ml-[9px]"><svg class="w-4 h-[14px]" viewBox="0 0 16 14"><rect x=".5" y=".5" width="15" height="13" fill="#f7faff" stroke="#546f9f"/><path d="M3 3.500h7M6 8.500h7" stroke="#4f6fae" stroke-width="1.500"/><path d="M3 6h8M6 11h5" stroke="#d57a4c"/></svg></button>
      <span class="w-px h-[18px] bg-[#93a5c2] ml-[7px]"></span>
      <button aria-label="筛选" class="ml-[7px] flex items-center gap-[6px]"><svg class="w-[14px] h-3" viewBox="0 0 14 12"><path d="M.5.5h13L8.500 6v5.500h-3V6z" fill="#8cc0ea" stroke="#3e77b0"/></svg><svg class="w-[5px] h-[3px]"><use href="#caret"/></svg></button>
      <span class="w-px h-[18px] bg-[#93a5c2] ml-[8px]"></span>
      <button aria-label="详细级别" class="ml-[5px] flex items-center gap-[3px]"><svg class="w-[17px] h-4" viewBox="0 0 17 16"><path d="M9 2.500a6 6 0 1 1-5 2" fill="none" stroke="#5a94d0" stroke-width="2.200"/><path d="M1 1h6v6z" fill="#5a94d0"/><path d="M8.500 4.500v8M4.500 8.500h8" stroke="#444" stroke-width="1.400"/></svg><svg class="w-[5px] h-[3px]"><use href="#caret"/></svg></button>
      <button aria-label="导图视图" class="ml-[4px] w-[22px] h-[19px] rounded-[3px] border border-[#c29a36] bg-[#fbd868] flex items-center justify-center"><svg class="w-4 h-[14px]" viewBox="0 0 16 14"><rect x=".5" y=".5" width="15" height="13" fill="#f0f5ff" stroke="#7f9ac8"/><path d="M2 4h3l6 6h3M2 10h3l6-6h3M2 7h12" fill="none" stroke="#4472b8"/></svg></button>
      <button aria-label="大纲视图" class="ml-[3px]"><svg class="w-[15px] h-[14px]" viewBox="0 0 15 14"><rect x=".5" y=".5" width="14" height="13" fill="#f0f5ff" stroke="#6f90c4"/><path d="M3 3h6M5 5.500h6M7 8h5M5 11h6" stroke="#4472b8"/></svg></button>
      <span class="ml-[13px]">89%</span>
      <button aria-label="缩小" class="ml-[11px] size-[15px] rounded-full border border-[#6a7b97] bg-[#e9eff9] flex items-center justify-center"><span class="w-[7px] h-[2px] bg-[#4a5568]"></span></button>
      <input type="range" aria-label="缩放" min="0" max="100" value="43" class="ml-2 w-[86px] h-4 appearance-none bg-gradient-to-b from-transparent from-45% via-white via-50% to-transparent to-55% [&::-webkit-slider-thumb]:appearance-none [&::-webkit-slider-thumb]:w-[9px] [&::-webkit-slider-thumb]:h-[13px] [&::-webkit-slider-thumb]:bg-[#e9eff9] [&::-webkit-slider-thumb]:border [&::-webkit-slider-thumb]:border-[#6a7b97] [&::-webkit-slider-thumb]:rounded-b-[4px]">
      <button aria-label="放大" class="ml-[6px]"><svg class="size-[15px]" viewBox="0 0 15 15"><circle cx="7.500" cy="7.500" r="7" fill="#e9eff9" stroke="#6a7b97"/><path d="M4 7.500h7M7.500 4v7" stroke="#4a5568" stroke-width="2"/></svg></button>
      <button aria-label="适合页面" class="ml-[5px]"><svg class="w-[15px] h-[14px]" viewBox="0 0 15 14"><rect x=".5" y=".5" width="14" height="13" fill="#fff" stroke="#4d6fb0"/><path d="M1 1.500h13" stroke="#4d6fb0"/><path d="M7.500 3l1.500 2H6zM7.500 13L9 11H6zM2 8l2-1.500v3zM13 8l-2-1.500v3zM5.500 8h4M7.500 6v4" fill="#34569c" stroke="#34569c" stroke-width=".6"/></svg></button>
      <span class="w-px h-[18px] bg-[#93a5c2] ml-2"></span>
      <button aria-label="任务窗格" class="ml-[7px] flex items-center gap-[3px] pr-[2px]"><svg class="w-4 h-3" viewBox="0 0 16 12"><rect x=".5" y=".5" width="14" height="11" fill="#fff" stroke="#6b7b95"/><path d="M9.500 1h3v10h-3z" fill="#f3dcae" stroke="#97773e" stroke-width=".7"/></svg><svg class="w-[5px] h-[3px]"><use href="#caret"/></svg></button>
    </div>
  </footer>

  <!-- Windows taskbar -->
  <div class="shrink-0 h-10 flex bg-gradient-to-r from-[#14222b] via-[#1d1d1f] to-[#0b1720] text-white">
    <button aria-label="开始" class="w-12 flex items-center justify-center"><svg class="size-4" viewBox="0 0 16 16"><path d="M0 2.300L6.800 1.300v6.400H0zM7.600 1.200L16 0v7.700H7.600zM0 8.400h6.800v6.300L0 13.800zM7.600 8.400H16V16l-8.400-1.200z" fill="#fff"/></svg></button>
    <label class="w-[344px] bg-[#f1f1f1] flex items-center pl-2 pr-[13px]">
      <svg class="w-6 h-[18px] shrink-0" viewBox="0 0 24 18"><rect width="24" height="18" rx="8" fill="#000"/><circle cx="6" cy="12" r="1.400" fill="#fff"/><circle cx="18.500" cy="12" r="1.400" fill="#fff"/></svg>
      <input type="text" aria-label="搜索" placeholder="在这里输入你要搜索的内容" class="flex-1 min-w-0 ml-2 text-sm leading-5 text-[#333] placeholder:text-[#333] outline-none">
      <svg class="w-[13px] h-4 shrink-0" viewBox="0 0 13 16"><rect x="4" y=".5" width="5" height="9" rx="1" fill="#333" stroke="#222"/><path d="M1.500 7v4.500h10V7M6.500 12v3M4 15.200h5" fill="none" stroke="#222" stroke-width="1.300"/></svg>
    </label>
    <button aria-label="任务视图" class="w-12 flex items-center justify-center"><svg class="w-4 h-[15px]" viewBox="0 0 16 15"><path d="M.5 0v2.500h10V0M.5 15v-2.500h10V15M.5 4.500h10v6H.5zM14.500 0v3M14.500 8v7" fill="none" stroke="#fff"/><path d="M13 4h3v3h-3z" fill="#fff"/></svg></button>
    <div class="flex gap-px ml-[3px]">
      <button aria-label="IntelliJ IDEA" class="relative w-12 flex items-center justify-center"><svg class="size-6" viewBox="0 0 24 24"><path d="M2 3l6-3 5 2-2 9-9 2z" fill="#dd3b6e"/><path d="M1 13l6-3 3 9-7 5-1-6z" fill="#b05fb0"/><path d="M0 11l4-1v4l-3 1z" fill="#f4844e"/><path d="M13 3l4-2 6 6 1 13-6 4-8-3z" fill="#2e6be0"/><rect x="4" y="4.500" width="15" height="15" fill="#0b0b0b"/><path d="M6 7h4M8 7v5M6 12h4M12 7h4v4q0 1.500-3.500 1M6 16.500h6" fill="none" stroke="#fff" stroke-width="1.300"/></svg><span class="absolute bottom-0 left-1 w-8 h-[2px] bg-[#76b9ed]"></span><span class="absolute bottom-0 left-9 w-2 h-[2px] bg-[#5c87a8]"></span></button>
      <button aria-label="Chrome" class="relative w-12 flex items-center justify-center"><svg class="size-[23px]" viewBox="0 0 24 24"><circle cx="12" cy="12" r="11.500" fill="#fbd04b"/><path d="M2 6.300A11.500 11.500 0 0 1 22 6.300H12L7 14z" fill="#dc4a3d"/><path d="M2 6.300A11.500 11.500 0 0 0 10.500 23.400L16 14.500 7 14.500z" fill="#2e9e58"/><circle cx="12" cy="12" r="5.300" fill="#f4f4f4"/><circle cx="12" cy="12" r="4.200" fill="#4b86ec"/></svg><span class="absolute bottom-0 left-1 w-10 h-[2px] bg-[#76b9ed]"></span></button>
      <button aria-label="文件资源管理器" class="relative w-12 flex items-center justify-center"><svg class="w-[22px] h-[18px]" viewBox="0 0 22 18"><path d="M0 0h8l1.500 2H22v16H0z" fill="#f4cd61"/><path d="M0 4h22v14H0z" fill="#fde9a0"/><path d="M4 18v-7h14v7h-4v-3.500H8V18z" fill="#3ea0cf"/></svg><span class="absolute bottom-0 left-1 w-10 h-[2px] bg-[#76b9ed]"></span></button>
      <button aria-label="Mindjet" class="relative w-12 bg-[#474d51] flex items-center justify-center"><svg class="w-[21px] h-[18px]"><use href="#mlogo"/></svg><span class="absolute bottom-0 inset-x-0 h-[2px] bg-[#76b9ed]"></span></button>
      <button aria-label="Camtasia" class="relative w-12 flex items-center justify-center"><svg class="size-6" viewBox="0 0 24 24"><rect width="24" height="24" rx="2" fill="#ee5142"/><path d="M19 5.500H8.500L6.500 7.500v9l2 2H19" fill="none" stroke="#fff" stroke-width="3.600"/></svg><span class="absolute bottom-0 left-1 w-10 h-[2px] bg-[#76b9ed]"></span></button>
    </div>

    <div class="ml-auto flex items-center">
      <button aria-label="人脉" class="mr-4"><svg class="size-4" viewBox="0 0 16 16" fill="none" stroke="#fff" stroke-width="1.200"><circle cx="11" cy="3.500" r="2.700"/><path d="M8.500 8.500c2-2 6-1.500 6.500 2.500"/><circle cx="5" cy="8" r="2.700"/><path d="M.7 15.500c0-5.500 8.500-5.500 8.600 0"/></svg></button>
      <button aria-label="显示隐藏的图标" class="w-6 flex justify-center"><svg class="w-3 h-[7px]" viewBox="0 0 12 7"><path d="M.7 6.300L6 1l5.300 5.300" fill="none" stroke="#fff" stroke-width="1.400"/></svg></button>
      <span class="w-6 flex justify-center"><svg class="size-4" viewBox="0 0 16 16"><circle cx="8" cy="8" r="8" fill="#1f9e9c"/><path d="M3.500 5.500C5 3 11 3 12.500 5.500L9.800 6.500V14H6.200V6.500z" fill="#e9c64a"/><path d="M8 3v11" stroke="#2b3a22" stroke-width="1.500"/></svg></span>
      <span class="w-6 flex justify-center"><svg class="size-4" viewBox="0 0 16 16"><rect width="16" height="16" rx="1.500" fill="#c81e25"/><g fill="none" stroke="#fff" stroke-width="1.400"><circle cx="5" cy="4.500" r="2"/><path d="M9.500 2.500h4v2.500h-3M3 9.500h4M3 13.500h4M3 11.500v2M10 12h4"/></g></svg></span>
      <span class="w-6 flex justify-center"><svg class="w-[17px] h-[11px]" viewBox="0 0 17 11"><path d="M4 9C-1 9 0 4 3.500 4 4.500 0 10 0 11 3.500c-3 0-4 2-4 3.500-2 0-2 3-1 3.500z" fill="#fff"/><path d="M7 11c-2 0-2-3.500.7-3.300C8 4 13 4 13.500 7c4 0 4 4 .5 4z" fill="#fff"/></svg></span>
      <span class="w-6 flex justify-center"><svg class="w-4 h-[15px]" viewBox="0 0 16 15"><path d="M3 0l12 1 1 12-4 2H0z" fill="#f6df3a"/><path d="M0 15l2-4 12 1 2 1-4 2z" fill="#d9b91f"/></svg></span>
      <span class="w-6 flex justify-center"><svg class="w-4 h-[11px]" viewBox="0 0 16 11" fill="none" stroke="#fff"><path d="M6.500 3.500h8v6h-8M15.500 5v3"/><path d="M8 5h5v3H8z" fill="#fff"/><path d="M1.500 0v2M4.500 0v2M.5 2.500h5v3h-5zM3 5.500v4h3"/></svg></span>
      <span class="w-6 flex justify-center"><svg class="w-4 h-[13px]" viewBox="0 0 16 13" fill="none" stroke="#fff"><path d="M.5 4.500h2.500l3-3.500v11l-3-3.500H.5z"/><path d="M8.500 4.500q1.200 2 0 4M10.500 3q2.200 3.500 0 7"/><path d="M12.500 1q3.500 5.500 0 11" stroke="#888"/></svg></span>
      <span class="w-6 flex justify-center"><svg class="w-[13px] h-3" viewBox="0 0 13 12" fill="none" stroke="#fff" stroke-width="1.100"><path d="M.5 11.500C.5 5 5 .5 12.500.5" stroke="#999"/><path d="M3 11.500C3 6.500 6.500 3.500 12.500 3.500M6 11.500c0-3 2.500-5 6.500-5"/><path d="M9 11.500c0-1.500 1.500-2.500 3.500-2.500v2.500z" fill="#fff"/></svg></span>
      <button class="w-[22px] text-[13px]">中</button>
      <button class="ml-1 mr-1 size-[15px] bg-white text-black font-medium text-[13px] leading-[15px]">M</button>
      <div class="ml-[10px] w-[70px] text-xs leading-[19px] text-center"><p>15:51</p><p>2018/10/10</p></div>
      <button aria-label="通知" class="relative ml-[14px] w-[26px] h-7"><svg class="absolute left-0 top-[5px] w-4 h-[15px]" viewBox="0 0 16 15"><path d="M0 0h16v12H7l-3 3v-3H0z" fill="#fff"/><path d="M3 3.500h10M3 6h10M3 8.500h7" stroke="#222"/></svg><span class="absolute left-[7px] top-[12px] size-4 rounded-full bg-[#2b3036] border border-[#7d848a] text-[11px] leading-[14px] font-bold">9</span></button>
      <span class="ml-[10px] mr-[2px] w-px h-10 bg-[#5a646c]"></span>
    </div>
  </div>

  <script>
    // Part of the map that is scrolled out at the left and top
    const scroll = { x: 5, y: 161 };

    const links = [
      'M57.5 174.500H106', 'M57.5 453.500H139',
      'M246 453.500H251M249.5 454V626Q249.500 630.500 253 630.500',
      'M415 453.500H419M425 381.500H422Q418.500 381.500 418.500 385V557Q418.500 560.500 422 560.500H465M422 381.500H461',
      'M471 381.500H474M474.5 381V295Q474.500 291 477 290.500M474.5 381V462Q474.500 466.500 478 466.500H594',
      'M480 289.500H551M561 289.500Q564 289.500 564.500 286.500Q565 284.500 568 284.500H784',
      'M475 363.500H538M475 432.500H515M547 363.500H550',
      'M573 338.500H554Q550.500 338.500 550.500 342V389Q550.500 392.500 554 392.500H584',
      'M583 338.500H821M716 318.500H591Q587.500 318.500 587.500 322V355Q587.500 358.500 591 358.500H767',
      'M594 392.500H597M735 382.500H601Q597.500 382.500 597.500 386V399Q597.500 402.500 601 402.500H758',
      'M525 432.500Q528 432.500 528.500 430Q529 427.500 532 427.500H596',
      'M603 466.500Q606 466.500 606.500 464Q607 461.500 610 461.500H655',
      'M475 560.500H541M555 500.500H482Q478.500 500.500 478.500 504V610Q478.500 613.500 482 613.500H598',
      'M565 500.500Q568 500.500 568.500 498Q569 495.500 572 495.500H702',
      'M479 535.500H515M525 535.500Q528 535.500 528.500 532Q529 529.500 532 529.500H584',
      'M479 587.500H519M220 174.500H222'
    ];

    // x is the left edge of the text, y its middle
    const topics = [
      { x: 256, y: 454, text: '基于TCP的Socket编程', kind: 'main' },
      { x: 256, y: 630, text: '基于TCP的Socket编程', kind: 'main' },
      { x: 425, y: 374, text: 'Client' },
      { x: 425, y: 553, text: 'Server' },
      { x: 480, y: 281, text: '建立套接字', kind: 'cjk' },
      { x: 570, y: 277, text: 'Socket(InetAddress address, int port)' },
      { x: 481, y: 354, text: '建立连接', kind: 'cjk' },
      { x: 557, y: 331, text: 'IN' },
      { x: 593, y: 311, text: 'getInputStream()' },
      { x: 593, y: 331, text: 'InputStreamReader(InputStream in)' },
      { x: 593, y: 351, text: 'BufferedReader(Reader in)' },
      { x: 557, y: 385, text: 'OUT' },
      { x: 604, y: 375, text: 'getOutputStream()' },
      { x: 604, y: 395, text: 'PrintWriter (Writer out)' },
      { x: 484, y: 423, text: '通信', kind: 'cjk' },
      { x: 534, y: 420, text: 'readLine()' },
      { x: 481, y: 458, text: '关闭IO流、Socket', kind: 'dark' },
      { x: 613, y: 454, text: 'close()' },
      { x: 485, y: 492, text: '建立套接字', kind: 'cjk' },
      { x: 574, y: 488, text: 'ServerSocket(int port)' },
      { x: 485, y: 526, text: '监听', kind: 'cjk' },
      { x: 534, y: 523, text: 'accept()' },
      { x: 485, y: 553, text: '建立连接', kind: 'cjk' },
      { x: 489, y: 579, text: '通信', kind: 'cjk' },
      { x: 485, y: 605, text: '关闭IO流、Socket', kind: 'dark' }
    ];
    const topicClass = {
      main: 'absolute h-4 whitespace-nowrap text-[11px] font-bold text-[#3a3a3a]',
      cjk: 'absolute h-4 whitespace-nowrap text-[13px] text-[#555]',
      dark: 'absolute h-4 whitespace-nowrap text-[13px] text-[#222]',
      sub: 'absolute h-4 whitespace-nowrap text-[11px] text-[#333]'
    };

    const toggles = [
      [226, 174, 'plus'], [241, 454, 'minus'], [410, 454, 'minus'], [465, 381, 'minus'],
      [556, 289, 'minus'], [542, 363, 'minus'], [578, 338, 'minus'], [589, 393, 'minus'],
      [520, 432, 'minus'], [598, 466, 'minus'], [470, 561, 'minus'], [560, 500, 'minus'],
      [520, 535, 'minus'], [546, 561, 'plus'], [524, 587, 'plus'], [603, 614, 'plus']
    ];
    const notes = [[394, 452], [704, 310], [810, 330], [755, 350], [724, 374], [746, 394]];

    const at = (x, y) => `style="left:${x - scroll.x}px;top:${y - scroll.y}px"`;
    const grip = `<span class="flex justify-between items-center h-[5px] px-[2px]">
      <svg class="w-[15px] h-[2px]" viewBox="0 0 15 2"><path d="M0 0h2v2H0zM4 0h2v2H4zM8 0h2v2H8zM12 0h2v2h-2z" fill="#123a66"/></svg>
      <svg class="w-2 h-[5px]" viewBox="0 0 8 5"><path d="M3.500 0v5L0 2.500zM4.500 0v5L8 2.500z" fill="#fff"/></svg></span>`;

    let html = `<svg class="absolute inset-0 w-full h-full"><g transform="translate(${-scroll.x} ${-scroll.y})">
      <path d="M41.500 351L57 174h1L44 351zM43.500 389h2.500L58 453.500h-1z" fill="#c6c6c6"/>
      <path d="${links.join('')}" fill="none" stroke="#bcbcbc"/>
      <circle cx="109" cy="174.500" r="2.500" fill="#fff" stroke="#bcbcbc"/>
      <circle cx="142" cy="453.500" r="2.500" fill="#fff" stroke="#bcbcbc"/></g></svg>`;

    html += `<div class="absolute w-[107px] h-[39px] rounded-r-[6px] border border-l-0 border-[#b7c3dd] bg-gradient-to-b from-[#c3d2ee] to-[#93aede] pl-px whitespace-nowrap text-base leading-9 font-bold text-[#2f3a4d]" ${at(5, 351)}>VA网络编程</div>`;
    html += `<div class="absolute w-[108px] h-[33px] rounded-[6px] border border-[#c3c6da] bg-gradient-to-b from-[#f7f8ff] to-[#e8efff] text-center text-[13px] leading-[30px] font-bold text-[#3a3f4a]" ${at(112, 158)}>Inernet寻址</div>`;
    html += `<div class="absolute w-[89px] h-[33px] rounded-[6px] border border-[#c3c6da] bg-gradient-to-b from-[#f7f8ff] to-[#e8efff] text-center text-[13px] leading-[30px] font-bold text-[#3a3f4a]" ${at(146, 437)}>Socket类</div>`;
    html += `<div class="absolute w-[135px] h-[25px] border-2 border-t-0 border-[#4a97e8] bg-white" ${at(251, 439)}><div class="bg-[#4a97e8]">${grip}</div></div>`;
    html += `<div class="absolute w-[76px] h-[29px] border-2 border-t-0 border-[#a5a0a0]" ${at(476, 264)}><div class="bg-[#a5a0a0]">${grip}</div></div>`;

    topics.forEach(t => {
      // Chinese characters stand one pixel larger than Latin ones in bold topics
      const text = t.kind === 'main' ? t.text.replace(/[\u4e00-\u9fff]+/g, '<span class="text-xs">$&</span>') : t.text;
      html += `<span class="${topicClass[t.kind || 'sub']}" ${at(t.x, t.y - 8)}>${text}</span>`;
    });
    toggles.forEach(([x, y, icon]) => {
      html += `<button aria-label="${icon === 'plus' ? '展开' : '折叠'}" class="absolute size-[11px]" ${at(x - 5, y - 5)}><svg class="size-[11px]"><use href="#${icon}"/></svg></button>`;
    });
    notes.forEach(([x, y]) => {
      html += `<svg class="absolute size-[14px]" ${at(x - 6, y - 7)}><use href="#note"/></svg>`;
    });

    // Mouse pointer
    html += `<svg class="absolute w-3 h-5" viewBox="0 0 12 20" ${at(477, 339)}><path d="M.7 1v15l3.500-3.200 2.500 5.800 2.300-1-2.500-5.600h4.800z" fill="#fff" stroke="#111"/></svg>`;
    html += `<button aria-label="导图总览" class="absolute right-0 bottom-[1px] size-4 border border-[#9a9a9a] bg-[#e4e4e4] flex items-center justify-center"><svg class="size-[10px]" viewBox="0 0 10 10"><path d="M.5.5h9v9h-9z" fill="#f8f8f8" stroke="#999"/><path d="M3 6.500V3h3.500M3 3l4 4" fill="none" stroke="#777"/></svg></button>`;

    document.getElementById('map').innerHTML = html;
  </script>
</body>
</html>
